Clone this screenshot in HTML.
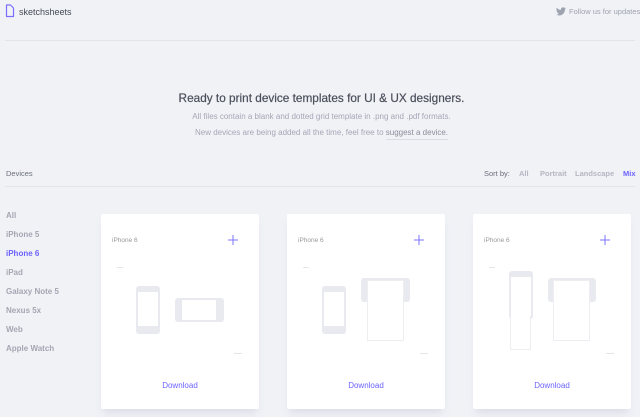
<!DOCTYPE html>
<html><head><meta charset="utf-8"><style>
*{margin:0;padding:0;box-sizing:border-box}
body{width:640px;height:417px;overflow:hidden;background:#f1f2f6;font-family:"Liberation Sans",sans-serif;position:relative}
.a{position:absolute;white-space:nowrap}
.line{position:absolute;height:1px;background:#e2e4ea}
.side{left:6px;font-size:8px;font-weight:bold;color:#a4a7b3}
.card{position:absolute;top:214px;width:158px;height:195px;background:#fff;border-radius:2px;box-shadow:0 6px 8px -3px rgba(170,175,200,.35)}
.t{position:absolute;left:11px;top:23px;font-size:6.5px;color:#999}
.plus{position:absolute;left:127px;top:21px}
.dl{position:absolute;left:0;width:158px;text-align:center;top:167px;font-size:8px;color:#6c63ff}
.d{position:absolute;height:1px;width:6px;background:#e5e5ea}
.dev{position:absolute;background:#e9e9f0;border-radius:3px}
.scr{position:absolute;background:#fff}
.pap{position:absolute;background:#fff;border:1px solid #eeeef2}
</style></head><body>
<svg class="a" style="left:5px;top:4px" width="10" height="14" viewBox="0 0 10 14"><path d="M1.5 1h4l3 3v8.5h-7z" fill="none" stroke="#7b6fff" stroke-width="1.2" stroke-linejoin="round"/></svg>
<div class="a" style="left:19px;top:7px;font-size:9px;color:#444a55">sketchsheets</div>
<svg class="a" style="left:556px;top:7px" width="10" height="9" viewBox="0 0 24 20"><path d="M24 2.4a10 10 0 0 1-2.8.8A5 5 0 0 0 23.3.4a10 10 0 0 1-3.1 1.2A4.9 4.9 0 0 0 11.8 6 14 14 0 0 1 1.7.9a4.9 4.9 0 0 0 1.5 6.6A4.9 4.9 0 0 1 1 6.9a4.9 4.9 0 0 0 3.9 4.9 5 5 0 0 1-2.2.1 4.9 4.9 0 0 0 4.6 3.4A9.9 9.9 0 0 1 0 17.3 14 14 0 0 0 7.5 19.5c9 0 14-7.5 14-14v-.6A10 10 0 0 0 24 2.4z" fill="#9ea3b0"/></svg>
<div class="a" style="left:569px;top:7px;font-size:7.5px;color:#9ea3b0">Follow us for updates</div>
<div class="line" style="left:5px;width:630px;top:40px"></div>
<div class="a" style="left:0;width:640px;text-align:center;top:91px;font-size:11.8px;color:#4a4f5b;padding-left:3px;-webkit-text-stroke:0.2px #4a4f5b">Ready to print device templates for UI &amp; UX designers.</div>
<div class="a" style="left:0;width:640px;text-align:center;top:112px;font-size:8px;color:#a4a8b6;padding-left:3px">All files contain a blank and dotted grid template in .png and .pdf formats.</div>
<div class="a" style="left:0;width:640px;text-align:center;top:128px;font-size:8px;color:#a4a8b6;padding-left:3px">New devices are being added all the time, feel free to <span style="color:#8a8e9c;border-bottom:1px solid #dcdde4;padding-bottom:2px">suggest a device.</span></div>
<div class="a" style="left:6px;top:169px;font-size:7.5px;color:#6a6f7c">Devices</div>
<div class="a" style="left:484px;top:169px;font-size:7.5px;color:#6a6f7c">Sort by:</div>
<div class="a" style="left:519px;top:169px;font-size:7.5px;color:#b4b7c3;font-weight:bold">All</div>
<div class="a" style="left:540px;top:169px;font-size:7.5px;color:#b4b7c3;font-weight:bold">Portrait</div>
<div class="a" style="left:575px;top:169px;font-size:7.5px;color:#b4b7c3;font-weight:bold">Landscape</div>
<div class="a" style="left:623px;top:169px;font-size:7.5px;color:#6c63ff;font-weight:bold">Mix</div>
<div class="line" style="left:5px;width:630px;top:186px"></div>
<div class="a side" style="top:211px">All</div>
<div class="a side" style="top:230px">iPhone 5</div>
<div class="a side" style="top:249px;color:#6c63ff">iPhone 6</div>
<div class="a side" style="top:268px">iPad</div>
<div class="a side" style="top:287px">Galaxy Note 5</div>
<div class="a side" style="top:306px">Nexus 5x</div>
<div class="a side" style="top:325px">Web</div>
<div class="a side" style="top:344px">Apple Watch</div>

<div class="card" style="left:101px">
<div class="t">iPhone 6</div><svg class="plus" width="10" height="10"><path d="M5 0v10M0 5h10" stroke="#7b74ff" stroke-width="1"/></svg>
<div class="d" style="left:16px;top:53px"></div><div class="d" style="left:133px;top:139px;width:8px"></div>
<div class="dev" style="left:35px;top:72px;width:24px;height:48px"><div class="scr" style="left:2px;top:6px;width:20px;height:34px"></div></div>
<div class="dev" style="left:74px;top:84px;width:49px;height:24px"><div class="scr" style="left:7px;top:2px;width:34px;height:20px"></div></div>
<div class="dl">Download</div></div>

<div class="card" style="left:287px">
<div class="t">iPhone 6</div><svg class="plus" width="10" height="10"><path d="M5 0v10M0 5h10" stroke="#7b74ff" stroke-width="1"/></svg>
<div class="d" style="left:16px;top:53px"></div><div class="d" style="left:133px;top:139px;width:8px"></div>
<div class="dev" style="left:35px;top:72px;width:24px;height:48px"><div class="scr" style="left:2px;top:6px;width:20px;height:34px"></div></div>
<div class="dev" style="left:74px;top:64px;width:49px;height:24px"></div>
<div class="pap" style="left:80px;top:66px;width:37px;height:61px"></div>
<div class="dl">Download</div></div>

<div class="card" style="left:473px">
<div class="t">iPhone 6</div><svg class="plus" width="10" height="10"><path d="M5 0v10M0 5h10" stroke="#7b74ff" stroke-width="1"/></svg>
<div class="d" style="left:16px;top:53px"></div><div class="d" style="left:133px;top:139px;width:8px"></div>
<div class="dev" style="left:36px;top:57px;width:24px;height:48px"><div class="scr" style="left:2px;top:6px;width:20px;height:42px"></div></div>
<div class="pap" style="left:37px;top:102px;width:21px;height:34px;border-top:none"></div>
<div class="dev" style="left:75px;top:64px;width:48px;height:24px"></div>
<div class="pap" style="left:80px;top:66px;width:37px;height:61px"></div>
<div class="dl">Download</div></div>
</body></html>
